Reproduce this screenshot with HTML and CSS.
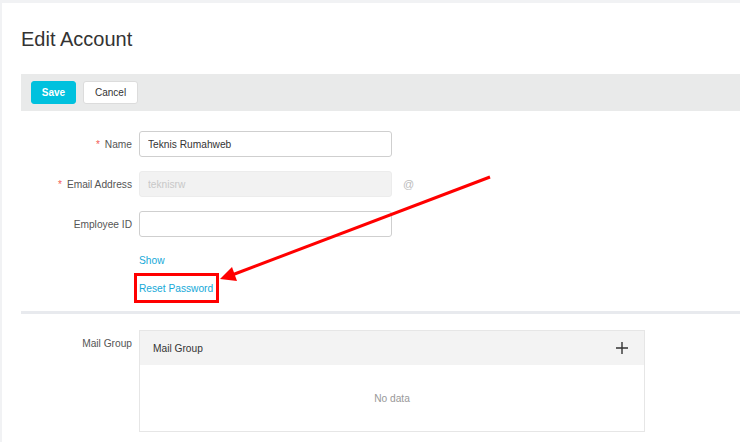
FILE: index.html
```html
<!doctype html>
<html lang="en-US">
  <head>
    <meta charset="utf-8" />
    <title>Edit Account</title>
    <link rel="stylesheet" href="styles.css">
  </head>
  <body>
	<div class="page">
		<h1>Edit Account</h1>
		<div class="toolbar">
			<button class="btn btn-primary">Save</button>
			<button class="btn">Cancel</button>
		</div>
		<div class="form">
			<label class="label"><span class="req">*</span>Name</label>
			<div class="field"><input class="input" type="text" value="Teknis Rumahweb"></div>

			<label class="label"><span class="req">*</span>Email Address</label>
			<div class="field"><input class="input" type="text" value="teknisrw" disabled><span class="at">@</span></div>

			<label class="label">Employee ID</label>
			<div class="field"><input class="input" type="text"></div>

			<div></div>
			<div class="links">
				<a class="link" href="#">Show</a>
				<span class="mark"><a class="link" href="#">Reset Password</a></span>
			</div>
		</div>
		<div class="divider"></div>
		<div class="form form-group">
			<label class="label">Mail Group</label>
			<div class="table">
				<div class="table-head">
					<span>Mail Group</span>
					<svg width="12" height="12" viewBox="0 0 12 12"><path d="M6 0v12M0 6h12" stroke="#333" stroke-width="1.4"/></svg>
				</div>
				<div class="table-body">No data</div>
			</div>
		</div>
	</div>
	<!-- annotation arrow -->
	<svg class="arrow" width="740" height="442" viewBox="0 0 740 442">
		<line x1="490" y1="177" x2="232" y2="275" stroke="#f00" stroke-width="3"/>
		<polygon points="220,279 232,267 237,281" fill="#f00"/>
	</svg>
  </body>
</html>
```

FILE: styles.css
```css
* {
	box-sizing: border-box;
	font-family: "Liberation Sans", Arial, sans-serif;
}

body {
	margin: 0;
	background: #f1f2f4;
	height: 442px;
	overflow: hidden;
	position: relative;
}

.page {
	margin: 3px 0 0 2px;
	background: #fff;
	height: 439px;
	padding-left: 19px;
}

h1 {
	margin: 0;
	padding-top: 25px;
	height: 71px;
	font-size: 20px;
	font-weight: normal;
	color: #333;
}

.toolbar {
	background: #e9eaea;
	height: 37px;
	padding: 7px 10px;
	display: flex;
	gap: 7px;
}

.btn {
	height: 23px;
	padding: 0 11px;
	font-size: 10px;
	color: #333;
	background: #fff;
	border: 1px solid #dcdcdc;
	border-radius: 3px;
}

.btn-primary {
	background: #00c1de;
	border-color: #00c1de;
	color: #fff;
	font-weight: bold;
	width: 45px;
	padding: 0;
}

.form {
	display: grid;
	grid-template-columns: 111px 1fr;
	column-gap: 7px;
	row-gap: 14px;
	padding-top: 20px;
	align-items: center;
}

.label {
	text-align: right;
	font-size: 10.2px;
	color: #555;
}

.req {
	color: #f25c54;
	margin-right: 5px;
	font-size: 10px;
}

.field {
	display: flex;
	align-items: center;
}

.input {
	width: 253px;
	height: 26px;
	border: 1px solid #cfcfcf;
	border-radius: 3px;
	padding: 0 8px;
	font-size: 10.2px;
	color: #333;
	background: #fff;
}

.input:disabled {
	background: #f2f2f2;
	border-color: #ececec;
	color: #c8c8c8;
}

.at {
	margin-left: 11px;
	font-size: 11px;
	color: #bbb;
}

.links {
	display: flex;
	flex-direction: column;
	align-items: flex-start;
	gap: 6px;
	padding-top: 4px;
	line-height: 12px;
}

.link {
	font-size: 10.2px;
	color: #16a9d8;
	text-decoration: none;
}

.mark {
	margin-left: -5px;
	border: 3px solid #f00;
	padding: 5px 3px 5px 2px;
}

.divider {
	height: 3px;
	margin-top: 8px;
	background: #e8eaee;
}

.form-group {
	padding-top: 16px;
	align-items: start;
}

.form-group .label {
	padding-top: 8px;
}

.table {
	width: 506px;
	border: 1px solid #e6e6e6;
}

.table-head {
	height: 34px;
	background: #f3f3f3;
	display: flex;
	align-items: center;
	justify-content: space-between;
	padding: 0 16px 0 13px;
	font-size: 10.2px;
	color: #333;
}

.table-body {
	height: 66px;
	display: flex;
	align-items: center;
	justify-content: center;
	font-size: 10.2px;
	color: #999;
}

.arrow {
	position: absolute;
	top: 0;
	left: 0;
	pointer-events: none;
}
```
